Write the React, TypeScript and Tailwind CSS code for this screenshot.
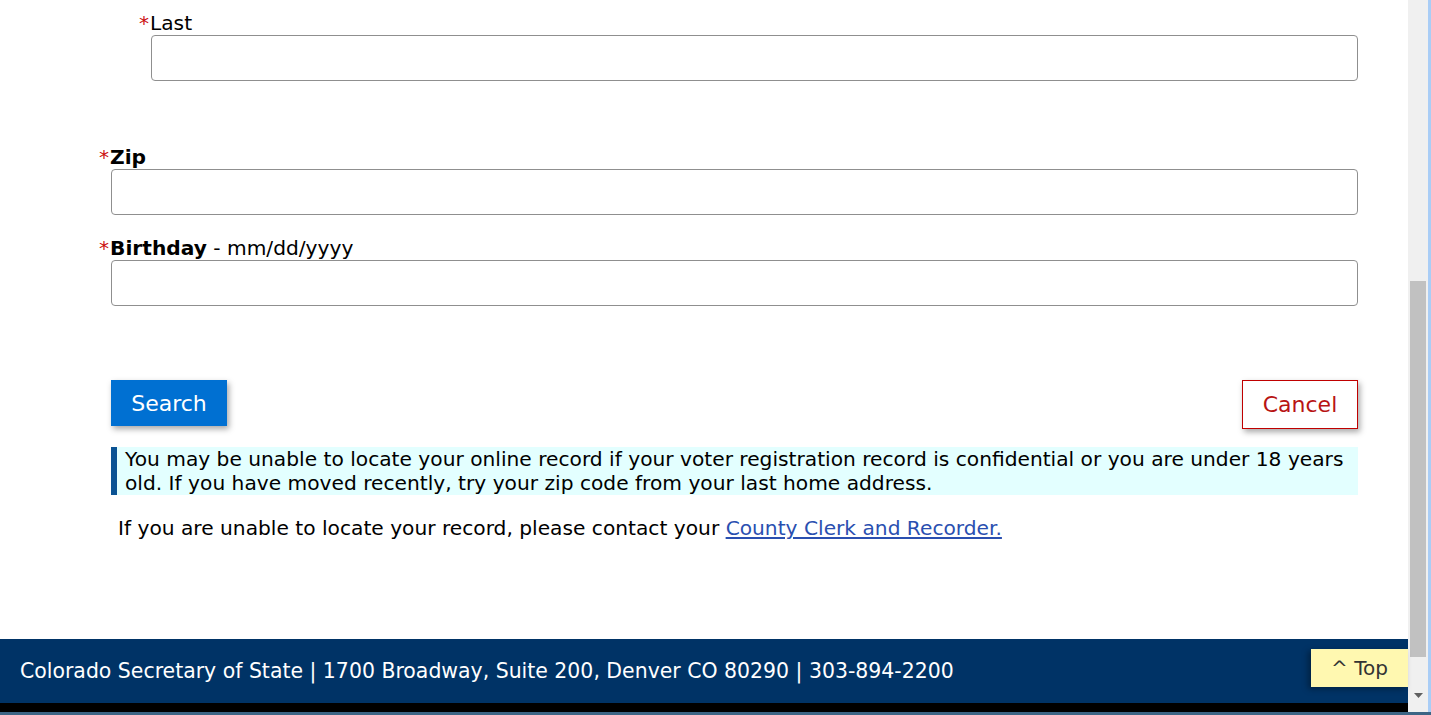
import React from "react";

const font = { fontFamily: '"DejaVu Sans", Verdana, sans-serif' };

function Required() {
  return <span className="mr-[1px] text-[20px] leading-none text-[#cc1010]">*</span>;
}

function Field({
  indent,
  label,
  bold,
  hint,
}: {
  indent: string;
  label: string;
  bold?: boolean;
  hint?: string;
}) {
  return (
    <div className={indent}>
      <label className="-ml-[12px] block pt-[1px] text-[20.2px] leading-[23px] text-black">
        <Required />
        <span className={bold ? "font-bold" : ""}>{label}</span>
        {hint && <span> - {hint}</span>}
      </label>
      <input
        type="text"
        className="block h-[46px] w-full rounded-[4px] border border-[#8f8f8f] bg-white px-3 text-[20px] outline-none"
      />
    </div>
  );
}

export default function App() {
  return (
    <div className="flex h-[715px] w-[1431px] flex-col overflow-hidden bg-white" style={font}>
      <div className="flex h-[712px]">
        {/* page */}
        <div className="flex w-[1408px] flex-col">
          <main className="flex-1 pt-[11px] pr-[50px]">
            <Field indent="ml-[151px]" label="Last" />
            <div className="mt-[64px]">
              <Field indent="ml-[111px]" label="Zip" bold />
            </div>
            <div className="mt-[21px]">
              <Field indent="ml-[111px]" label="Birthday" bold hint="mm/dd/yyyy" />
            </div>

            <div className="ml-[111px] mt-[74px] flex items-start justify-between">
              <button className="h-[46px] w-[116px] bg-[#0070d2] text-[22px] text-white shadow-[2px_3px_6px_rgba(0,0,0,0.35)]">
                Search
              </button>
              <button className="h-[49px] w-[116px] border border-[#c00000] bg-white text-[22px] text-[#b81414] shadow-[2px_3px_6px_rgba(0,0,0,0.35)]">
                Cancel
              </button>
            </div>

            <div className="ml-[111px] mt-[18px] border-l-[6px] border-[#0b5394] bg-[#e3ffff] pl-[8px] pr-3 text-[20.2px] leading-[24px] text-black">
              You may be unable to locate your online record if your voter registration record is
              confidential or you are under 18 years old. If you have moved recently, try your zip
              code from your last home address.
            </div>

            <p className="ml-[118px] mt-[21px] text-[20.2px] leading-[24px] text-black">
              If you are unable to locate your record, please contact your{" "}
              <a href="#" className="text-[#2a4fb0] underline">
                County Clerk and Recorder.
              </a>
            </p>
          </main>

          <footer className="relative flex h-[64px] items-center bg-[#003366] pl-[20px] text-[20.45px] text-white">
            Colorado Secretary of State | 1700 Broadway, Suite 200, Denver CO 80290 | 303-894-2200
            <button className="absolute right-0 top-[10px] h-[38px] w-[97px] bg-[#fff8b0] text-[20px] text-[#333] shadow-[-3px_2px_6px_rgba(0,0,0,0.35)]">
              ^ Top
            </button>
          </footer>
          <div className="h-[9px] bg-black" />
        </div>

        {/* scrollbar */}
        <div className="flex w-[20px] flex-col bg-[#f0f0f0] pt-[281px]">
          <div className="mx-[2px] h-[376px] bg-[#c1c1c1]" />
          <div className="flex flex-1 items-end justify-center pb-[13px]">
            <svg width="9" height="6" viewBox="0 0 9 6">
              <path d="M0 0 H9 L4.5 5 Z" fill="#606060" />
            </svg>
          </div>
        </div>
        <div className="w-[3px] bg-[#a9cdf6]" />
      </div>
      <div className="h-[3px] bg-[#3d6585]" />
    </div>
  );
}
